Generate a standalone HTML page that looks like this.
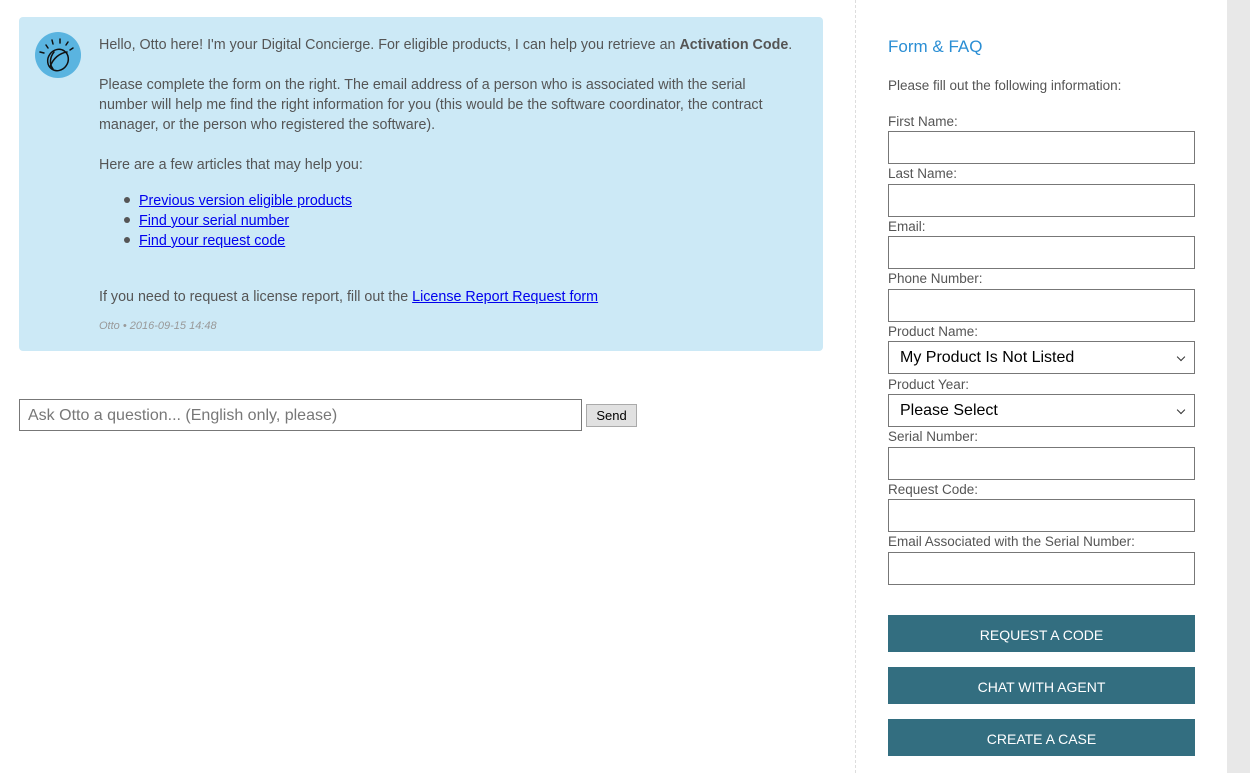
<!DOCTYPE html>
<html><head><meta charset="utf-8"><style>
*{box-sizing:border-box;margin:0;padding:0}
body{width:1250px;height:773px;background:#fff;font-family:"Liberation Sans",sans-serif;color:#555;position:relative;overflow:hidden;font-size:13.5px}
.a{position:absolute}
.bubble{left:19px;top:17px;width:804px;height:334px;background:#cce9f6;border-radius:4px}
.bubble p{position:absolute;left:80px;width:720px;line-height:20px;font-size:14.3px}
a{color:#00e;text-decoration:underline}
ul{position:absolute;left:120px;top:173px;list-style:none;line-height:20px;font-size:14.3px}
ul li::before{content:"";display:inline-block;width:6px;height:6px;border-radius:50%;background:#555;margin:0 9px 2px -15px}
.lbl{position:absolute;left:888px;font-size:13.5px;color:#555}
.inp{position:absolute;left:888px;width:307px;height:33px;border:1px solid #777;background:#fff}
.sel{font-size:16px;color:#000;padding:7px 0 0 11px}
.sel::after{content:"";position:absolute;right:10px;top:12px;width:5px;height:5px;border-right:1px solid #333;border-bottom:1px solid #333;transform:rotate(45deg)}
.btn{position:absolute;left:888px;width:307px;height:37px;background:#336e80;color:#fff;font-size:14px;text-align:center;line-height:40px}
</style></head><body>
<div class="a bubble">
<svg class="a" style="left:16px;top:15px" width="46" height="46" viewBox="0 0 46 46"><circle cx="23" cy="23" r="23" fill="#5ab4e0"/><g stroke="#111" stroke-width="1.5" fill="none" stroke-linecap="round"><path d="M13 16l-2-3M18 12l-1-4M25 11l0-4M31 13l2-3M35 18l3-2M9 21l-4-1"/><ellipse cx="23" cy="28" rx="10" ry="11" transform="rotate(35 23 28)"/><path d="M15 35c3-9 10-14 17-15"/><path d="M19 20c-4 5-5 12-1 17"/></g></svg>
<p style="top:18px;white-space:nowrap">Hello, Otto here! I'm your Digital Concierge. For eligible products, I can help you retrieve an <b>Activation Code</b>.</p>
<p style="top:58px;width:690px">Please complete the form on the right. The email address of a person who is associated with the serial number will help me find the right information for you (this would be the software coordinator, the contract manager, or the person who registered the software).</p>
<p style="top:138px">Here are a few articles that may help you:</p>
<ul style="top:174px"><li><a>Previous version eligible products</a></li><li><a>Find your serial number</a></li><li><a>Find your request code</a></li></ul>
<p style="top:270px">If you need to request a license report, fill out the <a>License Report Request form</a></p>
<p style="top:299px;font-size:11px;font-style:italic;color:#999">Otto • 2016-09-15 14:48</p>
</div>
<div class="a" style="left:19px;top:399px;width:563px;height:32px;border:1px solid #777;font-size:16px;color:#777;padding:7px 0 0 8px">Ask Otto a question... (English only, please)</div>
<div class="a" style="left:586px;top:404px;width:51px;height:23px;border:1px solid #aaa;background:#e1e1e1;color:#000;font-size:13px;text-align:center;line-height:22px">Send</div>
<div class="a" style="left:855px;top:0;height:773px;border-left:1px dashed #ddd"></div>
<div class="a" style="left:1227px;top:0;width:23px;height:773px;background:#e8e8e8"></div>
<div class="a" style="left:888px;top:37px;font-size:17px;color:#2a8ed4">Form &amp; FAQ</div>
<div class="lbl" style="top:78px">Please fill out the following information:</div>
<div class="lbl" style="top:114px">First Name:</div><div class="inp" style="top:131px"></div>
<div class="lbl" style="top:166px">Last Name:</div><div class="inp" style="top:184px"></div>
<div class="lbl" style="top:219px">Email:</div><div class="inp" style="top:236px"></div>
<div class="lbl" style="top:271px">Phone Number:</div><div class="inp" style="top:289px"></div>
<div class="lbl" style="top:324px">Product Name:</div><div class="inp sel" style="top:341px">My Product Is Not Listed</div>
<div class="lbl" style="top:377px">Product Year:</div><div class="inp sel" style="top:394px">Please Select</div>
<div class="lbl" style="top:429px">Serial Number:</div><div class="inp" style="top:447px"></div>
<div class="lbl" style="top:482px">Request Code:</div><div class="inp" style="top:499px"></div>
<div class="lbl" style="top:534px">Email Associated with the Serial Number:</div><div class="inp" style="top:552px"></div>
<div class="btn" style="top:615px">REQUEST A CODE</div>
<div class="btn" style="top:667px">CHAT WITH AGENT</div>
<div class="btn" style="top:719px">CREATE A CASE</div>
</body></html>
